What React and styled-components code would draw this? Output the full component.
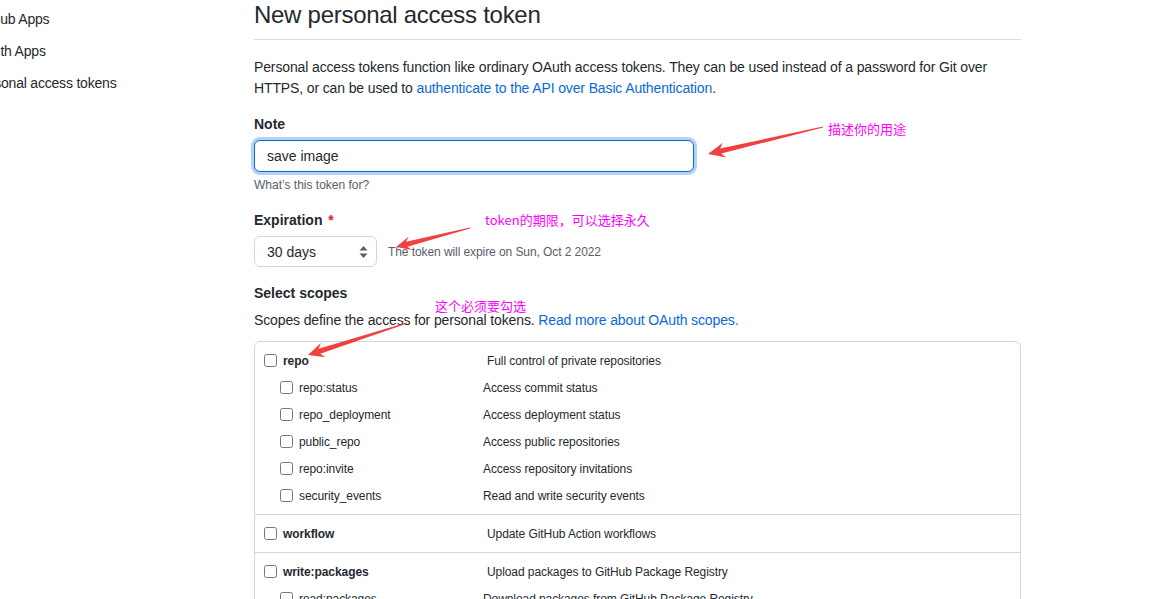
import React from 'react';
import styled, { createGlobalStyle } from 'styled-components';

const Global = createGlobalStyle`
  html, body { margin: 0; padding: 0; background: #fff; overflow: hidden; }
  body {
    font-family: "Segoe UI", "Liberation Sans", "Noto Sans CJK SC", sans-serif;
    color: #24292f;
    font-size: 14px;
    line-height: 1.5;
  }
  * { box-sizing: border-box; }
`;

const Page = styled.div`
  position: relative;
  width: 1154px;
  height: 599px;
  overflow: hidden;
  display: flex;
`;

const Sidebar = styled.nav`
  flex-shrink: 0;
  width: 228px;
  margin-left: -27px;
  padding-top: 3px;
  display: flex;
  flex-direction: column;
`;

const NavItem = styled.div`
  height: 32px;
  line-height: 32px;
  font-size: 14px;
  letter-spacing: -0.2px;
  white-space: nowrap;
  color: #24292f;
`;

const Main = styled.main`
  margin-left: 53px;
  width: 767px;
  flex-shrink: 0;
`;

const Heading = styled.h2`
  margin: 0;
  font-size: 24px;
  font-weight: 400;
  line-height: 30px;
  letter-spacing: -0.28px;
  padding-bottom: 9px;
  border-bottom: 1px solid #d8dee4;
`;

const Intro = styled.p`
  margin: 16px 0 0;
  padding-top: 1px;
  font-size: 14px;
  line-height: 21px;
  letter-spacing: -0.13px;
`;

const Link = styled.a`
  color: #0969da;
  text-decoration: none;
`;

const Group = styled.div`
  margin-top: ${p => p.$mt || 15}px;
`;

const Label = styled.div`
  font-size: 14px;
  font-weight: 600;
  line-height: 21px;
  padding-top: 1px;
  margin-bottom: ${p => p.$mb ?? 5}px;
`;

const Required = styled.span`
  color: #cf222e;
  margin-left: 2px;
`;

const TextInput = styled.input`
  display: block;
  width: 440px;
  height: 32px;
  padding: 5px 12px;
  font: inherit;
  font-size: 14px;
  color: #24292f;
  border: 1px solid #0969da;
  border-radius: 6px;
  outline: none;
  box-shadow: 0 0 0 3px rgba(9, 105, 218, 0.3);
  background: #fff;
`;

const Note = styled.div`
  margin-top: 4px;
  font-size: 12px;
  line-height: 18px;
  color: #57606a;
`;

const InlineRow = styled.div`
  display: flex;
  align-items: center;
  gap: 11px;
`;

const SelectBox = styled.div`
  width: 123px;
  height: 31px;
  border: 1px solid #d0d7de;
  border-radius: 6px;
  background: #fff;
  display: flex;
  align-items: center;
  justify-content: space-between;
  padding: 1px 8px 0 12px;
  font-size: 14px;
`;

const HelpText = styled.span`
  font-size: 12px;
  color: #57606a;
  letter-spacing: -0.08px;
`;

const Desc = styled.p`
  margin: 0;
  padding-top: 1px;
  font-size: 14px;
  line-height: 21px;
  letter-spacing: -0.13px;
`;

const ScopeBox = styled.div`
  margin-top: 10px;
  border: 1px solid #d0d7de;
  border-radius: 6px;
`;

const ScopeGroup = styled.div`
  padding: 5px 0;
  & + & { border-top: 1px solid #d0d7de; }
`;

const ScopeRow = styled.label`
  display: grid;
  grid-template-columns: 13px ${p => (p.$sub ? 178 : 198)}px 1fr;
  column-gap: 6px;
  align-items: center;
  height: 27px;
  padding-left: ${p => (p.$sub ? 25 : 9)}px;
  font-size: 12px;
  letter-spacing: -0.08px;
`;

const Check = styled.input`
  margin: 0;
  width: 13px;
  height: 13px;
`;

const ScopeName = styled.span`
  font-weight: ${p => (p.$bold ? 600 : 400)};
  color: #24292f;
`;

const ScopeDesc = styled.span`
  color: #24292f;
`;

const Overlay = styled.svg`
  position: absolute;
  left: 0;
  top: 0;
  pointer-events: none;
`;

const Annotation = styled.div`
  position: absolute;
  left: ${p => p.$x}px;
  top: ${p => p.$y}px;
  font-family: "Noto Sans CJK SC", "Liberation Sans", sans-serif;
  font-size: 13px;
  line-height: 18px;
  color: #ff00ff;
  white-space: nowrap;
`;

function arrowPoints(tail, tip, headLen, headHalf, neck = 2.6, tailHalf = 0.4, recess = 4) {
  const dx = tip[0] - tail[0];
  const dy = tip[1] - tail[1];
  const len = Math.hypot(dx, dy);
  const ux = dx / len, uy = dy / len;
  const nx = -uy, ny = ux;
  const bx = tip[0] - ux * headLen, by = tip[1] - uy * headLen;
  const kx = tip[0] - ux * (headLen - recess), ky = tip[1] - uy * (headLen - recess);
  const pts = [
    [tail[0] + nx * tailHalf, tail[1] + ny * tailHalf],
    [kx + nx * neck, ky + ny * neck],
    [bx + nx * headHalf, by + ny * headHalf],
    tip,
    [bx - nx * headHalf, by - ny * headHalf],
    [kx - nx * neck, ky - ny * neck],
    [tail[0] - nx * tailHalf, tail[1] - ny * tailHalf],
  ];
  return pts.map(p => `${p[0].toFixed(1)},${p[1].toFixed(1)}`).join(' ');
}

const SelectArrows = () => (
  <svg width="9" height="12" viewBox="0 0 9 12">
    <path d="M4.5 0 L8.5 4.5 L0.5 4.5 Z" fill="#57606a" />
    <path d="M4.5 12 L8.5 7.5 L0.5 7.5 Z" fill="#57606a" />
  </svg>
);

const repoSubs = [
  ['repo:status', 'Access commit status'],
  ['repo_deployment', 'Access deployment status'],
  ['public_repo', 'Access public repositories'],
  ['repo:invite', 'Access repository invitations'],
  ['security_events', 'Read and write security events'],
];

export default function App() {
  return (
    <>
      <Global />
      <Page>
        <Sidebar>
          <NavItem>GitHub Apps</NavItem>
          <NavItem>OAuth Apps</NavItem>
          <NavItem>Personal access tokens</NavItem>
        </Sidebar>
        <Main>
          <Heading>New personal access token</Heading>
          <Intro>
            Personal access tokens function like ordinary OAuth access tokens. They can be used instead of a password for Git over HTTPS, or can be used to{' '}
            <Link>authenticate to the API over Basic Authentication</Link>.
          </Intro>

          <Group $mt={14}>
            <Label>Note</Label>
            <TextInput defaultValue="save image" />
            <Note>What’s this token for?</Note>
          </Group>

          <Group $mt={15}>
            <Label>
              Expiration <Required>*</Required>
            </Label>
            <InlineRow>
              <SelectBox>
                <span>30 days</span>
                <SelectArrows />
              </SelectBox>
              <HelpText>The token will expire on Sun, Oct 2 2022</HelpText>
            </InlineRow>
          </Group>

          <Group $mt={15}>
            <Label $mb={5}>Select scopes</Label>
            <Desc>
              Scopes define the access for personal tokens. <Link>Read more about OAuth scopes.</Link>
            </Desc>
            <ScopeBox>
              <ScopeGroup>
                <ScopeRow>
                  <Check type="checkbox" />
                  <ScopeName $bold>repo</ScopeName>
                  <ScopeDesc>Full control of private repositories</ScopeDesc>
                </ScopeRow>
                {repoSubs.map(([n, d]) => (
                  <ScopeRow $sub key={n}>
                    <Check type="checkbox" />
                    <ScopeName>{n}</ScopeName>
                    <ScopeDesc>{d}</ScopeDesc>
                  </ScopeRow>
                ))}
              </ScopeGroup>
              <ScopeGroup>
                <ScopeRow>
                  <Check type="checkbox" />
                  <ScopeName $bold>workflow</ScopeName>
                  <ScopeDesc>Update GitHub Action workflows</ScopeDesc>
                </ScopeRow>
              </ScopeGroup>
              <ScopeGroup>
                <ScopeRow>
                  <Check type="checkbox" />
                  <ScopeName $bold>write:packages</ScopeName>
                  <ScopeDesc>Upload packages to GitHub Package Registry</ScopeDesc>
                </ScopeRow>
                <ScopeRow $sub>
                  <Check type="checkbox" />
                  <ScopeName>read:packages</ScopeName>
                  <ScopeDesc>Download packages from GitHub Package Registry</ScopeDesc>
                </ScopeRow>
              </ScopeGroup>
            </ScopeBox>
          </Group>
        </Main>

        <Overlay width="1154" height="599" viewBox="0 0 1154 599">
          <polygon points={arrowPoints([823, 127], [708, 154], 17, 7.5)} fill="#f24040" />
          <polygon points={arrowPoints([470, 228], [396, 247], 15, 7)} fill="#f24040" />
          <polygon points={arrowPoints([407, 323], [308, 355], 16, 7.5)} fill="#f24040" />
        </Overlay>
        <Annotation $x={828} $y={120}>描述你的用途</Annotation>
        <Annotation $x={485} $y={211}>token的期限，可以选择永久</Annotation>
        <Annotation $x={435} $y={297}>这个必须要勾选</Annotation>
      </Page>
    </>
  );
}
